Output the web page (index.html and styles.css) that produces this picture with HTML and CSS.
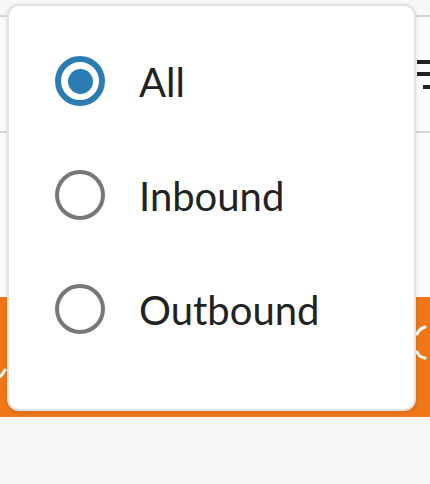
FILE: index.html
```html
<!DOCTYPE html>
<html lang="en">
<head>
<meta charset="utf-8">
<title>Direction filter</title>
<link rel="stylesheet" href="styles.css">
</head>
<body>
<div class="page">
  <section class="top">
    <div class="panel">
      <div class="toolbar">
        <svg class="filter-icon" width="24" height="30" viewBox="0 0 24 30" aria-hidden="true">
          <rect x="0" y="0" width="24" height="4" fill="#222"/>
          <rect x="0" y="12" width="24" height="4" fill="#222"/>
          <rect x="6" y="25" width="14" height="4" fill="#222"/>
        </svg>
      </div>
      <div class="table-row"></div>
    </div>
  </section>
  <section class="band">
    <svg class="band-icon left" width="20" height="40" viewBox="0 0 20 40" aria-hidden="true">
      <path d="M-2 27 Q2 25 5 19" fill="none" stroke="#fff" stroke-width="3" stroke-linecap="round"/>
    </svg>
    <svg class="band-icon right" width="20" height="50" viewBox="0 0 20 50" aria-hidden="true">
      <path d="M7 17 Q9 12 15 10" fill="none" stroke="#fff" stroke-width="3" stroke-linecap="round"/>
      <path d="M7 35 Q9 40 15 41" fill="none" stroke="#fff" stroke-width="3" stroke-linecap="round"/>
    </svg>
  </section>
  <section class="bottom"></section>

  <div class="menu" role="radiogroup">
    <label class="option">
      <span class="radio checked"><span class="dot"></span></span>
      <span class="label">All</span>
    </label>
    <label class="option">
      <span class="radio"></span>
      <span class="label">Inbound</span>
    </label>
    <label class="option">
      <span class="radio"></span>
      <span class="label">Outbound</span>
    </label>
  </div>
</div>
</body>
</html>
```

FILE: styles.css
```css
html, body {
  margin: 0;
  padding: 0;
}
body {
  font-family: Lato, "Open Sans", sans-serif;
  background: #f7f7f7;
  overflow: hidden;
}
.page {
  position: relative;
  width: 430px;
  height: 484px;
  display: flex;
  flex-direction: column;
}
.top {
  height: 297px;
  background: #f8f8f8;
  display: flex;
  flex-direction: column;
}
.panel {
  margin-top: 15px;
  flex: 1;
  background: #fbfbfb;
  border-top: 2px solid #d6d6d6;
  display: flex;
  flex-direction: column;
}
.toolbar {
  height: 114px;
  display: flex;
  align-items: flex-start;
  justify-content: flex-end;
  padding-top: 43px;
  box-sizing: border-box;
}
.filter-icon {
  margin-right: -11px;
  display: block;
}
.table-row {
  border-top: 2px solid #d6d6d6;
  flex: 1;
}
.band {
  height: 120px;
  background: #ef7718;
  display: flex;
  justify-content: space-between;
  align-items: flex-start;
}
.band-icon {
  display: block;
}
.band-icon.left {
  margin-top: 54px;
}
.band-icon.right {
  margin-top: 20px;
}
.bottom {
  flex: 1;
  background: #f7f7f7;
}

/* popup menu overlay */
.menu {
  position: absolute;
  left: 7px;
  top: 4px;
  width: 409px;
  height: 407px;
  box-sizing: border-box;
  background: #fff;
  border: 2px solid #e2e2e2;
  border-radius: 12px;
  box-shadow: 0 1px 4px rgba(0, 0, 0, 0.12);
  padding: 18px 0 0 46px;
  display: flex;
  flex-direction: column;
}
.option {
  height: 114px;
  display: flex;
  align-items: center;
  gap: 34px;
}
.radio {
  width: 50px;
  height: 50px;
  box-sizing: border-box;
  border-radius: 50%;
  border: 4px solid #777;
  display: flex;
  align-items: center;
  justify-content: center;
  flex: none;
}
.radio.checked {
  border: 6px solid #2c7cb4;
}
.dot {
  width: 25px;
  height: 25px;
  border-radius: 50%;
  background: #2c7cb4;
}
.label {
  font-size: 40px;
  color: #222;
  line-height: 1;
  padding-top: 1px;
}
```
